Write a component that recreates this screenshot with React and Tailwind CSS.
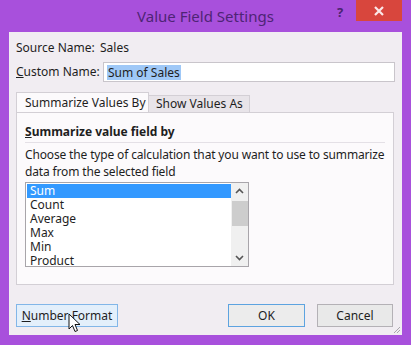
import React from "react";

const items = ["Sum", "Count", "Average", "Max", "Min", "Product"];

const font = { fontFamily: '"Noto Sans", "Open Sans", Arial, sans-serif' };

const App = () => {
  return (
    <div
      className="relative w-[411px] h-[345px] bg-[#a850dc] overflow-hidden text-[12px] text-[#1e1e1e]"
      style={font}
    >
      {/* title bar */}
      <div className="relative h-[32px] flex items-center justify-center">
        <span className="text-[15px] text-[#4e2475] mt-[1px]">Value Field Settings</span>
        <span className="absolute left-[337px] top-[3px] text-[13px] font-bold text-[#4a2470]">?</span>
        <div className="absolute left-[356px] top-0 w-[46px] h-[21px] bg-[#d8463d] flex items-center justify-center">
          <svg width="10" height="10" viewBox="0 0 10 10">
            <path d="M1 1 L9 9 M9 1 L1 9" stroke="#fbe9e9" strokeWidth="2.2" />
          </svg>
        </div>
      </div>

      {/* dialog body */}
      <div className="relative ml-[9px] w-[393px] h-[303px] bg-[#f1edf2] flex flex-col px-[7px] pt-[8px]">
        <div className="flex items-center h-[16px] leading-[16px]">
          <span className="w-[84px]">Source Name:</span>
          <span>Sales</span>
        </div>

        <div className="flex items-center mt-[6px]">
          <span className="w-[87px]">
            <u>C</u>ustom Name:
          </span>
          <div className="w-[292px] h-[20px] bg-white border border-[#c9c5cb] flex items-center px-[3px]">
            <span className="bg-[#9fc8f7] px-[1px] leading-[15px]">Sum of Sales</span>
          </div>
        </div>

        {/* tabs */}
        <div className="flex items-end mt-[11px] h-[19px]">
          <div className="h-[20px] w-[133px] bg-[#fcfafc] border border-b-0 border-[#d3cfd5] flex items-center pl-[8px] relative z-10">
            Summarize Values By
          </div>
          <div className="h-[17px] w-[101px] bg-[#e8e4e9] border border-l-0 border-b-0 border-[#d3cfd5] flex items-center pl-[7px]">
            Show Values As
          </div>
        </div>

        <div className="w-[378px] h-[173px] bg-[#fcfafc] border border-[#d3cfd5] px-[8px] pt-[10px]">
          <div className="relative flex items-center h-[17px]">
            <span className="font-bold pr-[4px]">
              <u>S</u>ummarize value field by
            </span>
          </div>
          <div className="h-px bg-[#e4e0e6] mt-[2px]" />
          <div className="leading-[17px] mt-[3px] whitespace-nowrap tracking-[-0.15px]">
            <div>Choose the type of calculation that you want to use to summarize</div>
            <div>data from the selected field</div>
          </div>

          <div className="mt-[2px] w-[224px] h-[85px] bg-white border border-[#a8a5aa] flex">
            <div className="flex-1 pt-px pl-px">
              {items.map((it, i) => (
                <div
                  key={it}
                  className={
                    i === 0
                      ? "h-[14px] leading-[14px] pl-[3px] bg-[#3399ff] text-white text-[12px]"
                      : "h-[14px] leading-[14px] pl-[3px] text-[12px]"
                  }
                >
                  {it}
                </div>
              ))}
            </div>
            <div className="w-[17px] bg-[#f0f0f0] flex flex-col items-center">
              <svg width="17" height="17" viewBox="0 0 17 17">
                <path d="M5 10 L8.5 6.5 L12 10" stroke="#555" strokeWidth="1.6" fill="none" />
              </svg>
              <div className="w-[16px] h-[25px] bg-[#cdcdcd] mt-[1px]" />
              <div className="flex-1" />
              <svg width="17" height="17" viewBox="0 0 17 17">
                <path d="M5 7 L8.5 10.5 L12 7" stroke="#555" strokeWidth="1.6" fill="none" />
              </svg>
            </div>
          </div>
        </div>

        {/* buttons */}
        <div className="flex mt-[19px]">
          <div className="w-[102px] h-[23px] bg-[#e3effb] border border-[#82b6e8] flex items-center justify-center">
            <span>
              <u>N</u>umber Format
            </span>
          </div>
          <div className="flex-1" />
          <div className="w-[77px] h-[23px] bg-[#ececec] border border-[#5da3e0] flex items-center justify-center mr-[12px]">
            OK
          </div>
          <div className="w-[76px] h-[23px] bg-[#e9e9e9] border border-[#b4b1b6] flex items-center justify-center mr-[2px]">
            Cancel
          </div>
        </div>

        {/* resize grip */}
        <svg className="absolute right-[1px] bottom-[1px]" width="10" height="10" viewBox="0 0 10 10">
          <path d="M9 3 L3 9 M9 6 L6 9" stroke="#a9a6ab" strokeWidth="1" />
        </svg>
      </div>

      {/* mouse cursor */}
      <svg className="absolute left-[68px] top-[313px]" width="14" height="21" viewBox="0 0 14 21">
        <path
          d="M1 1 L1 16 L4.5 12.5 L7 18.5 L9.5 17.5 L7 11.5 L12 11.5 Z"
          fill="#fff"
          stroke="#111"
          strokeWidth="1"
          strokeLinejoin="round"
        />
      </svg>
    </div>
  );
};

export default App;
